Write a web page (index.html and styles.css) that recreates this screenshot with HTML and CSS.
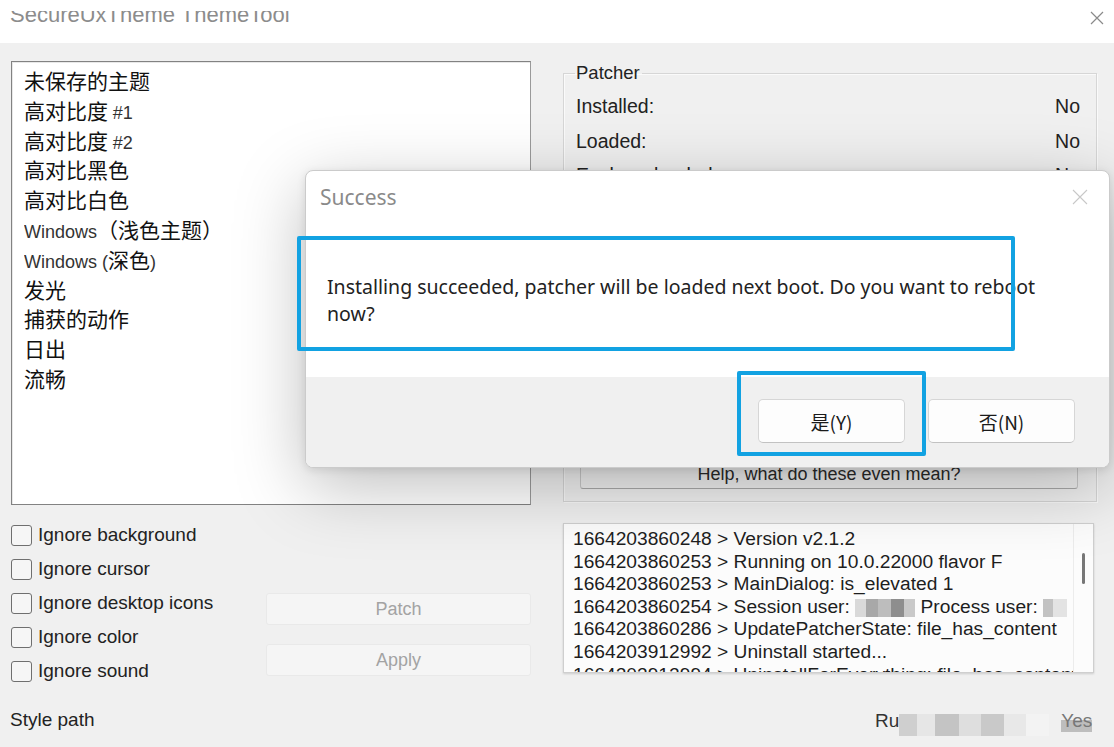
FILE: index.html
```html
<!DOCTYPE html>
<html lang="zh-CN">
<head>
<meta charset="utf-8">
<title>SecureUxTheme ThemeTool</title>
<link rel="stylesheet" href="styles.css">
</head>
<body>
<div class="window">
  <header class="titlebar">
    <div class="title-clip"><span class="title-text">SecureUxTheme ThemeTool</span></div>
    <svg class="win-close" width="14" height="14" viewBox="0 0 14 14"><path d="M1 1L13 13M13 1L1 13" stroke="#8a8a8a" stroke-width="1.2" fill="none"/></svg>
  </header>

  <main class="main">
    <section class="left">
      <ul class="listbox">
        <li>未保存的主题</li>
        <li>高对比度 <span class="lat">#1</span></li>
        <li>高对比度 <span class="lat">#2</span></li>
        <li>高对比黑色</li>
        <li>高对比白色</li>
        <li><span class="lat">Windows</span>（浅色主题）</li>
        <li><span class="lat">Windows (</span>深色<span class="lat">)</span></li>
        <li>发光</li>
        <li>捕获的动作</li>
        <li>日出</li>
        <li>流畅</li>
      </ul>

      <div class="options">
        <div class="checks">
          <label class="check"><span class="box"></span>Ignore background</label>
          <label class="check"><span class="box"></span>Ignore cursor</label>
          <label class="check"><span class="box"></span>Ignore desktop icons</label>
          <label class="check"><span class="box"></span>Ignore color</label>
          <label class="check"><span class="box"></span>Ignore sound</label>
        </div>
        <div class="actions">
          <button class="btn-disabled">Patch</button>
          <button class="btn-disabled">Apply</button>
        </div>
      </div>

      <div class="stylepath">Style path</div>
    </section>

    <section class="right">
      <fieldset class="group">
        <legend>Patcher</legend>
        <div class="rows">
          <div class="row"><span>Installed:</span><span>No</span></div>
          <div class="row"><span>Loaded:</span><span>No</span></div>
          <div class="row"><span>Explorer loaded:</span><span>No</span></div>
          <div class="row"><span>LogonUI loaded:</span><span>No</span></div>
        </div>
        <button class="btn-help">Help, what do these even mean?</button>
      </fieldset>

      <div class="log">
        <div class="log-lines">
          <div>1664203860248 &gt; Version v2.1.2</div>
          <div>1664203860253 &gt; Running on 10.0.22000 flavor F</div>
          <div>1664203860253 &gt; MainDialog: is_elevated 1</div>
          <div>1664203860254 &gt; Session user: <span class="mosaic m1"></span> Process user: <span class="mosaic m2"></span></div>
          <div>1664203860286 &gt; UpdatePatcherState: file_has_content</div>
          <div>1664203912992 &gt; Uninstall started...</div>
          <div>1664203912994 &gt; UninstallForEverything: file_has_content</div>
        </div>
        <div class="scrollbar"><span class="thumb"></span></div>
      </div>

      <div class="status">Ru<span class="mosaic m3"></span><span class="yes">Yes</span></div>
    </section>
  </main>

  <div class="dialog">
    <div class="dlg-head">
      <span class="dlg-title">Success</span>
      <svg class="dlg-close" width="16" height="16" viewBox="0 0 16 16"><path d="M1 1L15 15M15 1L1 15" stroke="#c8c8c8" stroke-width="1.1" fill="none"/></svg>
    </div>
    <div class="dlg-body">
      <p class="dlg-msg">Installing succeeded, patcher will be loaded next boot. Do you want to reboot now?</p>
    </div>
    <div class="dlg-foot">
      <button class="dlg-btn">是(Y)</button>
      <button class="dlg-btn">否(N)</button>
    </div>
  </div>

  <div class="mark mark-msg"></div>
  <div class="mark mark-btn"></div>
</div>
</body>
</html>
```

FILE: styles.css
```css
* { box-sizing: border-box; }

html, body {
  margin: 0;
  padding: 0;
}

body {
  width: 1114px;
  height: 747px;
  overflow: hidden;
  background: #f0f0f0;
  font-family: "Liberation Sans", "Noto Sans CJK SC", sans-serif;
  color: #1e1e1e;
}

.window {
  position: relative;
  width: 1114px;
  height: 747px;
}

/* title bar */
.titlebar {
  height: 43px;
  background: #ffffff;
  display: flex;
  align-items: flex-start;
  justify-content: space-between;
  padding: 11px 10px 0 10px;
}

.title-clip {
  height: 14px;
  overflow: hidden;
}

.title-text {
  display: block;
  margin-top: -9px;
  font-family: "Liberation Sans", sans-serif;
  font-size: 22px;
  line-height: 26px;
  color: #8c8c8c;
}

.win-close {
  margin-top: 0;
}

/* main area */
.main {
  display: grid;
  grid-template-columns: 520px 534px;
  column-gap: 32px;
  padding: 18px 0 0 11px;
}

.listbox {
  list-style: none;
  margin: 0;
  height: 444px;
  background: #ffffff;
  border: 1px solid #828282;
  border-right-color: #9a9a9a;
  box-shadow: inset 1px 1px 0 #e8e8e8;
  padding: 4px 12px;
  font-family: "Noto Sans CJK SC", "Liberation Sans", sans-serif;
  font-size: 21px;
  color: #111;
}

.listbox li {
  display: block;
  height: 29.8px;
  line-height: 29.8px;
  white-space: nowrap;
  overflow: hidden;
}

.lat {
  font-family: "Liberation Sans", sans-serif;
  font-size: 18px;
  line-height: 1;
  color: #333;
}

.options {
  display: grid;
  grid-template-columns: 255px 265px;
  margin-top: 13px;
}

.checks {
  display: flex;
  flex-direction: column;
}

.check {
  height: 34px;
  display: flex;
  align-items: center;
  font-size: 19px;
  color: #222;
}

.box {
  width: 21px;
  height: 21px;
  border: 1px solid #6f6f6f;
  border-radius: 3px;
  background: #f6f6f6;
  margin-right: 6px;
  flex: none;
}

.actions {
  display: flex;
  flex-direction: column;
  gap: 19px;
  padding-top: 75px;
}

.btn-disabled {
  height: 32px;
  width: 265px;
  background: #f5f5f5;
  border: 1px solid #e9e9e9;
  border-radius: 3px;
  font-family: "Liberation Sans", sans-serif;
  font-size: 18px;
  color: #a3a3a3;
}

.stylepath {
  margin-top: 20px;
  font-size: 19px;
  line-height: 24px;
  color: #222;
  margin-left: -1px;
}

/* right column */
.right {
  display: flex;
  flex-direction: column;
}

.group {
  margin: 0;
  height: 441px;
  border: 1px solid #d6d6d6;
  box-shadow: 1px 1px 0 #fafafa, inset 1px 1px 0 #fafafa;
  padding: 0 16px 11px 12px;
}

.group legend {
  padding: 0 2px 0 1px;
  margin-left: -1px;
  font-size: 18.5px;
  line-height: 24px;
  color: #222;
}

.rows {
  height: 375px;
  padding-top: 4px;
  overflow: hidden;
}

.row {
  height: 34.8px;
  display: flex;
  align-items: center;
  justify-content: space-between;
  font-size: 19.5px;
  color: #222;
}

.btn-help {
  display: block;
  width: 498px;
  margin: 0 0 0 4px;
  height: 29px;
  background: #efefef;
  border: 1px solid #c9c9c9;
  border-bottom-color: #a9a9a9;
  border-radius: 3px;
  font-family: "Liberation Sans", sans-serif;
  font-size: 18px;
  color: #2a2a2a;
}

.log {
  margin-top: 21px;
  width: 531px;
  height: 150px;
  background: #fcfcfc;
  border: 1px solid #cfcfcf;
  box-shadow: 0 1px 2px rgba(0,0,0,0.15);
  display: flex;
  overflow: hidden;
}

.log-lines {
  flex: 1;
  padding: 4px 0 0 9px;
  font-size: 19.2px;
  line-height: 22.6px;
  white-space: nowrap;
  overflow: hidden;
  color: #1e1e1e;
}

.scrollbar {
  width: 20px;
  border-left: 1px solid #ececec;
  display: flex;
  justify-content: center;
  padding-top: 29px;
}

.thumb {
  width: 3px;
  height: 31px;
  background: #777;
  border-radius: 2px;
}

.mosaic {
  display: inline-block;
  vertical-align: middle;
  height: 18px;
}

.m1 {
  width: 60px;
  background: linear-gradient(90deg, #d9d9d9 0 18%, #a8a8a8 18% 38%, #bdbdbd 38% 60%, #8e8e8e 60% 82%, #c9c9c9 82%);
}

.m2 {
  width: 24px;
  background: linear-gradient(90deg, #c2c2c2 0 40%, #e3e3e3 40%);
}

.status {
  margin-top: 33px;
  margin-left: 312px;
  display: flex;
  align-items: center;
  font-size: 19px;
  color: #333;
}

.m3 {
  width: 150px;
  height: 22px;
  margin-top: 8px;
  background: linear-gradient(90deg, #cfcfcf 0 12%, #e6e6e6 12% 24%, #c4c4c4 24% 40%, #dedede 40% 55%, #c9c9c9 55% 70%, #e8e8e8 70% 85%, #f3f3f3 85%);
}

.yes {
  margin-left: 12px;
  color: #777;
  background: linear-gradient(180deg, transparent 0 45%, #bdbdbd 45%);
}

/* dialog */
.dialog {
  position: absolute;
  left: 305px;
  top: 170px;
  width: 805px;
  height: 298px;
  background: #ffffff;
  border: 1px solid #cbcbcb;
  border-radius: 8px;
  box-shadow: 0 18px 70px rgba(0, 0, 0, 0.26), 0 2px 8px rgba(0,0,0,0.1);
  overflow: hidden;
  display: flex;
  flex-direction: column;
  font-family: "Noto Sans", "Noto Sans CJK SC", sans-serif;
}

.dlg-head {
  height: 52px;
  flex: none;
  display: flex;
  justify-content: space-between;
  align-items: center;
  padding: 0 21px 0 14px;
}

.dlg-title {
  font-size: 21px;
  color: #8a8a8a;
}

.dlg-body {
  flex: 1;
  padding: 50px 0 0 21px;
}

.dlg-msg {
  margin: 0;
  width: 725px;
  font-size: 19.5px;
  line-height: 27px;
  color: #222;
}

.dlg-foot {
  height: 90px;
  flex: none;
  background: #f0f0f0;
  display: flex;
  justify-content: flex-end;
  align-items: center;
  gap: 23px;
  padding: 0 34px 2px 0;
}

.dlg-btn {
  width: 147px;
  height: 44px;
  background: #fdfdfd;
  border: 1px solid #d6d6d6;
  border-bottom-color: #c2c2c2;
  border-radius: 5px;
  font-family: "Noto Sans CJK SC", sans-serif;
  font-size: 19px;
  color: #1a1a1a;
}

/* annotation boxes */
.mark {
  position: absolute;
  border: 4px solid #12a2e2;
  border-radius: 2px;
}

.mark-msg {
  left: 297px;
  top: 236px;
  width: 718px;
  height: 115px;
}

.mark-btn {
  left: 737px;
  top: 371px;
  width: 189px;
  height: 85px;
}
```
